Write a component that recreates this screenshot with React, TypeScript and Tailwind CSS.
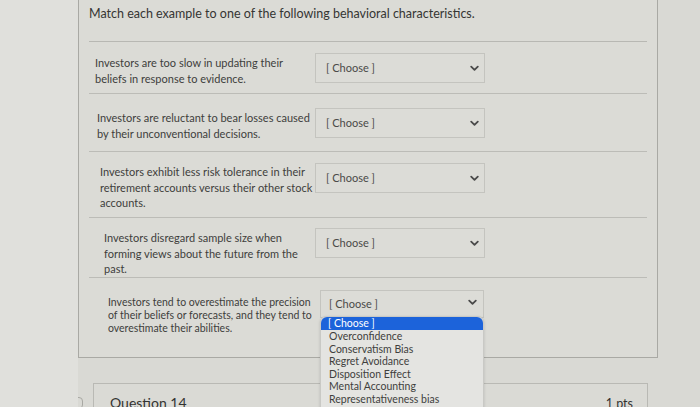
import React from "react";

const rows = [
  { text: "Investors are too slow in updating their beliefs in response to evidence.", h: "h-[52px]", pt: "pt-[13px]", pl: "pl-[6px]", spt: "pt-[11px]" },
  { text: "Investors are reluctant to bear losses caused by their unconventional decisions.", h: "h-[58px]", pt: "pt-[16px]", pl: "pl-[8px]", spt: "pt-[14px]" },
  { text: "Investors exhibit less risk tolerance in their retirement accounts versus their other stock accounts.", h: "h-[66px]", pt: "pt-[12px]", pl: "pl-[11px]", spt: "pt-[11px]" },
  { text: "Investors disregard sample size when forming views about the future from the past.", h: "h-[60px]", pt: "pt-[12px]", pl: "pl-[15px]", spt: "pt-[10px]" },
];

const options = [
  "Overconfidence",
  "Conservatism Bias",
  "Regret Avoidance",
  "Disposition Effect",
  "Mental Accounting",
  "Representativeness bias",
];

function Chevron() {
  return (
    <svg width="9" height="7" viewBox="0 0 9 7" className="shrink-0">
      <path d="M1.2 1.6 L4.5 4.9 L7.8 1.6" fill="none" stroke="#4a4a4a" strokeWidth="1.8" strokeLinecap="round" strokeLinejoin="round" />
    </svg>
  );
}

function Select() {
  return (
    <div className="w-[170px] h-[30px] border border-[#c4c4bf] bg-[#dcdcd7] flex items-center justify-between pl-[10px] pr-[5px] text-[11px] text-[#4a4a48]">
      <span>[ Choose ]</span>
      <Chevron />
    </div>
  );
}

export default function App() {
  return (
    <div
      className="w-[700px] h-[407px] overflow-hidden relative bg-[#d9d9d4] text-[#3e3e3c]"
      style={{ fontFamily: "Lato, 'Open Sans', sans-serif" }}
    >
      <div className="absolute left-0 top-0 w-[9px] h-[14px] rounded-br-full bg-[#2b2b2b]" />
      <div className="absolute left-0 top-0 w-[78px] h-[407px] bg-[#e0e0dc]" />
      <div className="relative ml-[78px] w-[580px] h-[358px] border-l border-r border-b border-[#a9a9a4] bg-[#dbdbd6]">
        <div className="pl-[10px] pt-[5px] h-[41px] text-[12.5px] leading-[18px] text-[#353533]">
          Match each example to one of the following behavioral characteristics.
        </div>
        <div className="mx-[10px] border-t border-[#b8b8b3]" />
        {rows.map((r, i) => (
          <div key={i} className={`mx-[10px] border-b border-[#bcbcb7] flex ${r.h}`}>
            <div className={`w-[226px] shrink-0 ${r.pl} pr-[2px] ${r.pt} text-[11px] leading-[15.5px]`}>{r.text}</div>
            <div className={r.spt}>
              <Select />
            </div>
          </div>
        ))}
        <div className="mx-[10px] flex h-[81px]">
          <div className="w-[229px] shrink-0 pl-[19px] pr-0 pt-[18px] text-[10.5px] leading-[13px]">
            Investors tend to overestimate the precision of their beliefs or forecasts, and they tend to overestimate their abilities.
          </div>
          <div className="pt-[12px] pl-[2px]">
            <div className="w-[164px] h-[28px] border border-[#c4c4bf] bg-[#dcdcd7] flex items-start justify-between pl-[8px] pr-[6px] pt-[5px] text-[11px] text-[#4a4a48]">
              <span>[ Choose ]</span>
              <span className="pt-[3px]"><Chevron /></span>
            </div>
          </div>
        </div>
        <div className="absolute left-[241px] top-[316px] w-[164px] h-[100px] bg-[#e4e4e1] border border-[#c9c9c5] rounded-t-[6px] text-[10.5px] leading-[12.6px] text-[#3f3f3d] shadow-[0_1px_3px_rgba(0,0,0,0.15)]">
          <div className="bg-[#1c63da] text-white rounded-t-[6px] pl-[7px] h-[13px] leading-[13px]">[ Choose ]</div>
          {options.map((o) => (
            <div key={o} className="pl-[8px]">{o}</div>
          ))}
        </div>
      </div>
      <div className="flex items-start mt-[25px]">
        <div className="ml-[72px] mt-[14px] w-[11px] h-[12px] border border-[#a8a8a3] rounded-r-[4px]" />
        <div className="ml-[10px] w-[555px] h-[40px] border border-[#b9b9b4] bg-[#dadad5] flex justify-between pl-[16px] pr-[14px] pt-[9px]">
          <span className="text-[14px] leading-[20px] text-[#333331]">Question 14</span>
          <span className="text-[12.5px] leading-[20px] text-[#333331] pt-[1px]">1 pts</span>
        </div>
      </div>
    </div>
  );
}
